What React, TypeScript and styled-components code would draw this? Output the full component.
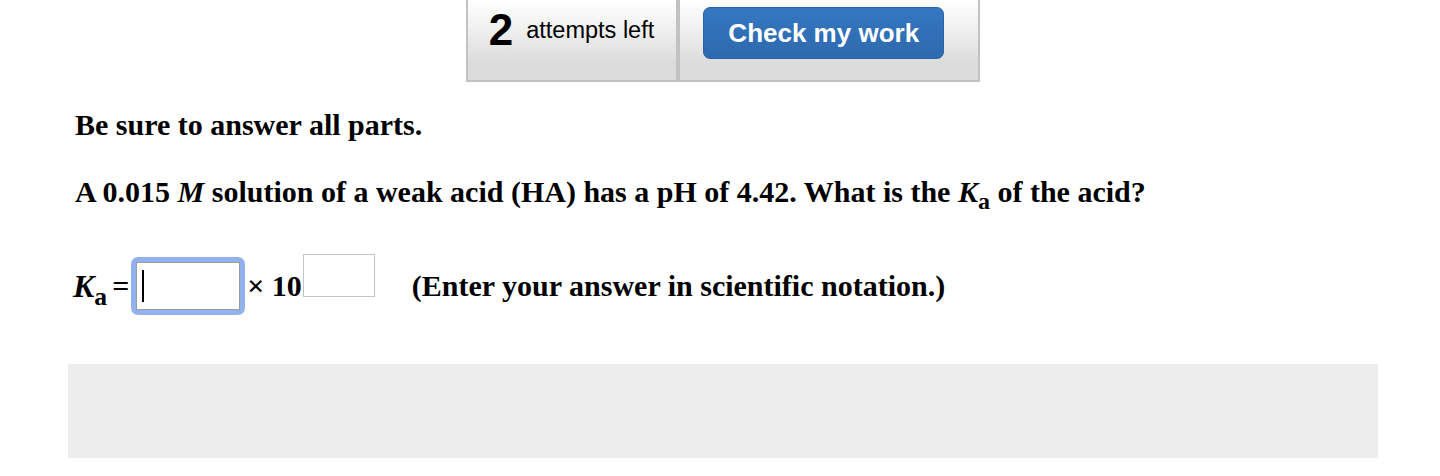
import React from "react";
import styled, { createGlobalStyle } from "styled-components";

const Global = createGlobalStyle`
  html, body { margin: 0; padding: 0; background: #ffffff; }
  body { font-family: "Liberation Serif", "Times New Roman", serif; color: #000; }
`;

const Page = styled.div`
  width: 1310px;
  margin-left: 68px;
  display: flex;
  flex-direction: column;
`;

const Toolbar = styled.div`
  align-self: center;
  display: flex;
  height: 82px;
`;

const ToolCell = styled.div<{ $padL: number; $padR: number }>`
  display: flex;
  align-items: flex-start;
  box-sizing: border-box;
  height: 82px;
  padding: 0 ${(p) => p.$padR}px 0 ${(p) => p.$padL}px;
  border: 2px solid #c2c2c2;
  border-top: none;
  background: linear-gradient(#ffffff 0%, #f3f3f3 30%, #dcdcdc 78%, #dcdcdc 100%);
`;

const Attempts = styled.div`
  display: flex;
  align-items: center;
  gap: 13px;
  height: 60px;
  font-family: "Liberation Sans", Arial, sans-serif;
  color: #000;
`;

const AttemptCount = styled.span`
  font-size: 44px;
  font-weight: 700;
`;

const AttemptLabel = styled.span`
  font-size: 23.5px;
`;

const CheckButton = styled.button`
  margin-top: 7px;
  width: 241px;
  height: 52px;
  border: 1px solid #2a62a6;
  border-radius: 7px;
  background: linear-gradient(#3477c2, #2e69ad);
  color: #ffffff;
  font-family: "Liberation Sans", Arial, sans-serif;
  font-size: 26px;
  font-weight: 700;
  padding: 0;
  cursor: pointer;
`;

const Content = styled.div`
  padding-left: 7px;
  display: flex;
  flex-direction: column;
`;

const Para = styled.p<{ $top: number }>`
  margin: ${(p) => p.$top}px 0 0 0;
  font-size: 30px;
  font-weight: 700;
  line-height: 34px;
`;

const Sub = styled.sub`
  font-size: 0.8em;
  font-style: normal;
  vertical-align: -0.3em;
  line-height: 0;
`;

const AnswerRow = styled.div`
  display: flex;
  align-items: center;
  margin-top: 48px;
  font-size: 30px;
  font-weight: 700;
  line-height: 34px;
`;

const KLabel = styled.span`
  margin-left: -2px;
  font-size: 32px;
`;

const Equals = styled.span`
  margin-left: 5px;
`;

const FocusRing = styled.span`
  display: inline-flex;
  margin-left: 2px;
  padding: 5px;
  border-radius: 7px;
  background: #92b2ef;
`;

const AnswerBox = styled.span`
  display: inline-flex;
  align-items: center;
  box-sizing: border-box;
  width: 104px;
  height: 48px;
  padding-left: 5px;
  background: #fff;
  border: 1px solid #9c9c9c;
`;

const Caret = styled.span`
  width: 2px;
  height: 32px;
  background: #000;
`;

const Times = styled.span`
  margin-left: 2px;
`;

const ExponentBox = styled.span`
  align-self: flex-start;
  margin-top: -3px;
  margin-left: 1px;
  box-sizing: border-box;
  width: 72px;
  height: 43px;
  border: 1px solid #c4c4c4;
  background: #fff;
`;

const Hint = styled.span`
  margin-left: 37px;
`;

const Panel = styled.div`
  margin-top: 49px;
  height: 94px;
  background: #ededed;
`;

export default function App() {
  return (
    <>
      <Global />
      <Page>
        <Toolbar>
          <ToolCell $padL={21} $padR={22}>
            <Attempts>
              <AttemptCount>2</AttemptCount>
              <AttemptLabel>attempts left</AttemptLabel>
            </Attempts>
          </ToolCell>
          <ToolCell $padL={23} $padR={34}>
            <CheckButton>Check my work</CheckButton>
          </ToolCell>
        </Toolbar>
        <Content>
          <Para $top={26}>Be sure to answer all parts.</Para>
          <Para $top={33}>
            A 0.015 <i>M</i> solution of a weak acid (HA) has a pH of 4.42. What is the{" "}
            <i>K</i>
            <Sub>a</Sub> of the acid?
          </Para>
          <AnswerRow>
            <KLabel>
              <i>K</i>
              <Sub>a</Sub>
            </KLabel>
            <Equals>=</Equals>
            <FocusRing>
              <AnswerBox>
                <Caret />
              </AnswerBox>
            </FocusRing>
            <Times>× 10</Times>
            <ExponentBox />
            <Hint>(Enter your answer in scientific notation.)</Hint>
          </AnswerRow>
        </Content>
        <Panel />
      </Page>
    </>
  );
}
